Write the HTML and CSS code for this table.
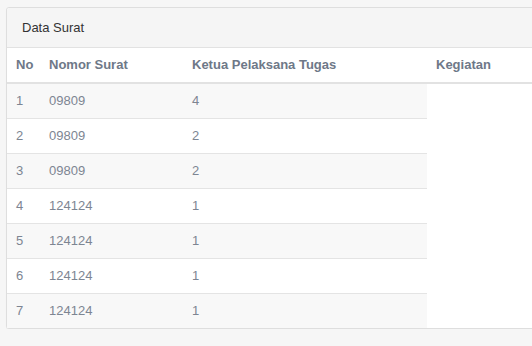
FILE: index.html
```html
<!DOCTYPE html>
<html lang="id">
<head>
<meta charset="utf-8">
<title>Data Surat</title>
<link rel="stylesheet" href="styles.css">
</head>
<body>
<div class="panel">
  <div class="panel-heading">Data Surat</div>
  <table class="data-table">
    <thead>
      <tr>
        <th class="col-no">No</th>
        <th class="col-nomor">Nomor Surat</th>
        <th class="col-ketua">Ketua Pelaksana Tugas</th>
        <th class="col-kegiatan">Kegiatan</th>
      </tr>
    </thead>
    <tbody>
      <tr class="odd"><td>1</td><td>09809</td><td>4</td><td class="kegiatan" rowspan="7"></td></tr>
      <tr><td>2</td><td>09809</td><td>2</td></tr>
      <tr class="odd"><td>3</td><td>09809</td><td>2</td></tr>
      <tr><td>4</td><td>124124</td><td>1</td></tr>
      <tr class="odd"><td>5</td><td>124124</td><td>1</td></tr>
      <tr><td>6</td><td>124124</td><td>1</td></tr>
      <tr class="odd"><td>7</td><td>124124</td><td>1</td></tr>
    </tbody>
  </table>
</div>
</body>
</html>
```

FILE: styles.css
```css
html, body {
  margin: 0;
  padding: 0;
}

body {
  background: #f6f6f6;
  font-family: "Liberation Sans", Arial, sans-serif;
  font-size: 13px;
  color: #333;
  overflow: hidden;
  padding: 7px 0 0 6px;
}

.panel {
  width: 640px;
  background: #fff;
  border: 1px solid #dedede;
  border-radius: 3px;
  box-shadow: 0 1px 1px rgba(0, 0, 0, 0.04);
}

.panel-heading {
  background: #f5f5f5;
  border-bottom: 1px solid #e2e2e2;
  padding: 10px 15px;
  line-height: 19px;
  color: #333;
  border-radius: 3px 3px 0 0;
}

.data-table {
  width: 100%;
  table-layout: fixed;
  border-collapse: collapse;
  border-spacing: 0;
}

.data-table th,
.data-table td {
  text-align: left;
  padding: 8px 9px;
  line-height: 18px;
}

.data-table th {
  font-weight: bold;
  color: #6e7888;
  border-bottom: 2px solid #e2e2e2;
}

.data-table td {
  color: #7d8592;
  border-top: 1px solid #e4e4e4;
}

.data-table tbody tr:first-child td {
  border-top: none;
}

.data-table tr.odd td {
  background: #f8f8f8;
}

.col-no { width: 15px; }
.col-nomor { width: 125px; }
.col-ketua { width: 226px; }

.data-table td.kegiatan,
.data-table tr.odd td.kegiatan {
  background: #fff;
  border: none;
}
```
